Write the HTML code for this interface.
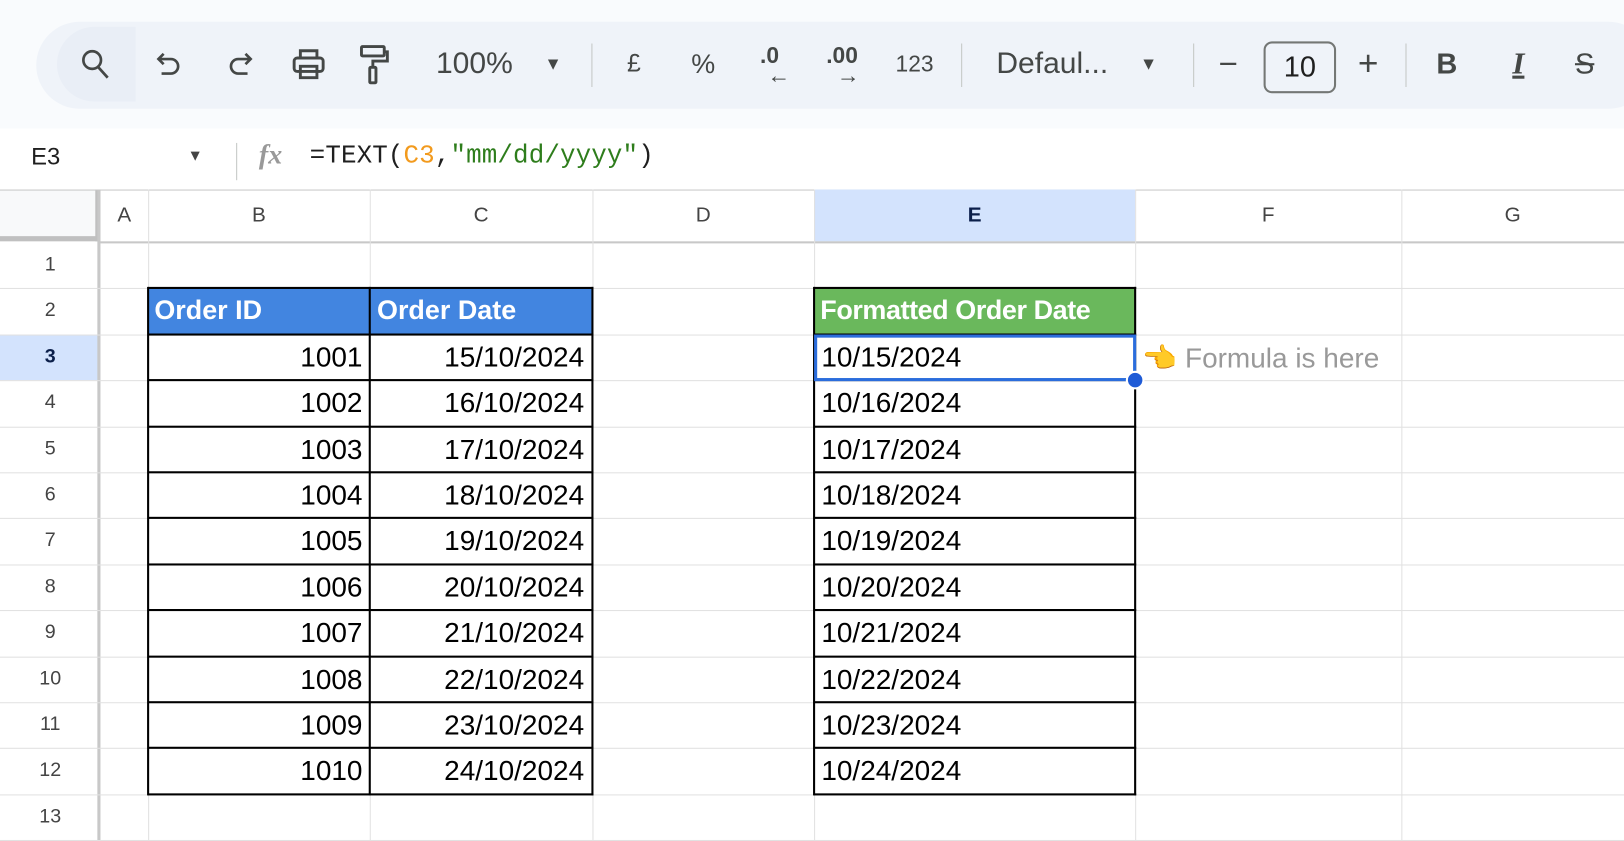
<!DOCTYPE html>
<html><head><meta charset="utf-8"><style>
*{margin:0;padding:0;box-sizing:border-box}
html,body{width:1624px;height:841px;overflow:hidden;background:#fff}
#w{position:absolute;left:0;top:0;width:1568px;height:812px;transform:scale(1.03572);transform-origin:0 0;font-family:"Liberation Sans",Arial,sans-serif;color:#1f1f1f}
.a{position:absolute}
.tb{left:0;top:0;width:1568px;height:124px;background:#f9fbfd}
.pill{left:35px;top:21px;width:1560px;height:84px;background:#eff3f9;border-radius:42px}
.ic{position:absolute;top:62px;transform:translate(-50%,-50%);color:#444746;font-size:24px;white-space:nowrap}
.sep{position:absolute;top:42px;width:1px;height:42px;background:#c4c7c5}
.g{position:absolute;left:0;top:183px;width:1568px;height:629px}
.hl{position:absolute;background:#e1e1e1}
.ch{position:absolute;top:0;height:50px;line-height:50px;text-align:center;font-size:20px;color:#444}
.rh{position:absolute;left:0;width:97px;text-align:center;font-size:19px;color:#444}
.cell{position:absolute;font-size:27px;color:#000;white-space:nowrap}
</style></head><body><div id="w">
<div class="a tb"></div>
<div class="a pill"></div>
<div class="a" style="left:55px;top:26px;width:76px;height:72px;background:#e9eef6;border-radius:36px 0 0 36px"></div>
<svg class="a" style="left:76px;top:45px" width="32" height="34" viewBox="0 0 32 34" fill="none" stroke="#444746" stroke-width="2.6"><circle cx="13" cy="13" r="8.5"/><path d="M19 20l9 10"/></svg>
<svg class="a" style="left:150px;top:48px" width="28" height="30" viewBox="0 0 28 30" fill="none" stroke="#444746" stroke-width="2.6"><path d="M8 4L3 9l5 5"/><path d="M3 9h12a7 7 0 010 14H6"/></svg>
<svg class="a" style="left:218px;top:48px" width="28" height="30" viewBox="0 0 28 30" fill="none" stroke="#444746" stroke-width="2.6"><path d="M19 4l5 5-5 5"/><path d="M24 9H12a7 7 0 000 14h9"/></svg>
<svg class="a" style="left:280px;top:44px" width="36" height="36" viewBox="0 0 36 36" fill="none" stroke="#444746" stroke-width="2.8"><path d="M10 12V5h16v7"/><rect x="4" y="12" width="28" height="13" rx="3"/><rect x="10" y="20" width="16" height="11"/></svg>
<svg class="a" style="left:346px;top:42px" width="30" height="42" viewBox="0 0 30 42" fill="none" stroke="#444746" stroke-width="2.8"><rect x="3" y="3" width="22" height="9" rx="1"/><path d="M25 8h3v9H14v6"/><rect x="11" y="23" width="6" height="15" rx="1"/></svg>
<div class="ic" style="left:458px;font-size:29px">100%</div>
<div class="ic" style="left:534px;font-size:17px">▼</div>
<div class="sep" style="left:571px"></div>
<div class="ic" style="left:612px;font-size:24px">£</div>
<div class="ic" style="left:679px;font-size:26px">%</div>
<div class="ic" style="left:743px;font-size:22px;top:54px;font-weight:bold">.0</div>
<div class="ic" style="left:752px;font-size:22px;top:73px;font-weight:bold">←</div>
<div class="ic" style="left:813px;font-size:22px;top:54px;font-weight:bold">.00</div>
<div class="ic" style="left:819px;font-size:22px;top:73px;font-weight:bold">→</div>
<div class="ic" style="left:883px;font-size:22px">123</div>
<div class="sep" style="left:928px"></div>
<div class="ic" style="left:1016px;font-size:29px">Defaul...</div>
<div class="ic" style="left:1109px;font-size:17px">▼</div>
<div class="sep" style="left:1152px"></div>
<div class="ic" style="left:1186px;font-size:32px">−</div>
<div class="a" style="left:1220px;top:40px;width:70px;height:50px;border:2px solid #747775;border-radius:8px;text-align:center;line-height:46px;font-size:28px;color:#1f1f1f">10</div>
<div class="ic" style="left:1321px;font-size:34px">+</div>
<div class="sep" style="left:1357px"></div>
<div class="ic" style="left:1397px;font-weight:bold;font-size:28px">B</div>
<div class="ic" style="left:1466px;font-style:italic;font-weight:bold;font-family:'Liberation Serif',serif;font-size:30px;text-decoration:underline">I</div>
<div class="ic" style="left:1530px;font-size:28px;text-decoration:line-through">S</div>

<div class="a" style="left:30px;top:138px;font-size:23px">E3</div>
<div class="a" style="left:181px;top:142px;font-size:15px;color:#444">▼</div>
<div class="a" style="left:228px;top:138px;width:1px;height:36px;background:#c4c7c5"></div>
<div class="a" style="left:250px;top:134px;font-size:27px;font-style:italic;font-family:'Liberation Serif',serif;color:#999;font-weight:bold">fx</div>
<div class="a" style="left:299px;top:136px;font-size:25px;font-family:'Liberation Mono',monospace;letter-spacing:0.1px">=TEXT(<span style="color:#f29a1d">C3</span>,<span style="color:#2e7d1c">"mm/dd/yyyy"</span>)</div>

<div class="g">
<div class="a" style="left:0;top:0;width:97px;height:50px;background:#f8f9fa;border-right:5px solid #c0c0c0;border-bottom:5px solid #c0c0c0"></div>
<div class="hl" style="left:0;top:0;width:1568px;height:1px;background:#c8c8c8"></div>
<div class="a" style="left:786px;top:0;width:310px;height:50px;background:#d3e3fd"></div>
<div class="a" style="left:0;top:140px;width:97px;height:44px;background:#d3e3fd"></div>
<div class="hl" style="left:97px;top:50px;width:1471px;height:2px;background:#c8c8c8"></div>
<div class="hl" style="left:0;top:0;width:97px;height:629px;background:transparent;border-right:3px solid #c8c8c8"></div>
<div class="ch" style="left:97px;width:46px">A</div>
<div class="ch" style="left:143px;width:214px">B</div>
<div class="ch" style="left:357px;width:215px">C</div>
<div class="ch" style="left:572px;width:214px">D</div>
<div class="ch" style="left:786px;width:310px;font-weight:bold;color:#0b1f4a">E</div>
<div class="ch" style="left:1096px;width:257px">F</div>
<div class="ch" style="left:1353px;width:215px">G</div>
</div>
</div>
<script>
var g=document.querySelector('.g'),h='';
var cols=[143,357,572,786,1096,1353];
cols.forEach(function(x){h+='<div class="hl" style="left:'+x+'px;top:0;width:1px;height:629px"></div>'});
var top0=51,rh=44.4;
for(var i=0;i<13;i++){var y=top0+(i+1)*rh;
h+='<div class="hl" style="left:0;top:'+y+'px;width:1568px;height:1px"></div>';
var yy=top0+i*rh;
h+='<div class="rh" style="top:'+yy+'px;height:'+rh+'px;line-height:'+rh+'px;'+(i==2?'font-weight:bold;color:#0b1f4a':'')+'">'+(i+1)+'</div>';}
var t2=top0+rh;
h+='<div class="a" style="left:143px;top:'+t2+'px;width:429px;height:'+rh+'px;background:#4285e0"></div>';
h+='<div class="a" style="left:786px;top:'+t2+'px;width:310px;height:'+rh+'px;background:#6ab85c"></div>';
for(var r=0;r<=11;r++){var y=t2+r*rh;
h+='<div class="a" style="left:143px;top:'+(y-1)+'px;width:430px;height:2px;background:#000"></div>';
h+='<div class="a" style="left:786px;top:'+(y-1)+'px;width:311px;height:2px;background:#000"></div>';}
[143,357,572,786,1096].forEach(function(x){h+='<div class="a" style="left:'+(x-1)+'px;top:'+(t2-1)+'px;width:2px;height:'+(11*rh+2)+'px;background:#000"></div>'});
h+='<div class="cell" style="left:149px;top:'+(t2+6)+'px;color:#fff;font-weight:bold;font-size:26px">Order ID</div>';
h+='<div class="cell" style="left:364px;top:'+(t2+6)+'px;color:#fff;font-weight:bold;font-size:26px">Order Date</div>';
h+='<div class="cell" style="left:792px;top:'+(t2+6)+'px;color:#fff;font-weight:bold;font-size:26px;letter-spacing:-0.4px">Formatted Order Date</div>';
for(var k=0;k<10;k++){var y=t2+(k+1)*rh+7,d=15+k;
h+='<div class="cell" style="right:'+(1568-350)+'px;top:'+y+'px">'+(1001+k)+'</div>';
h+='<div class="cell" style="right:'+(1568-564)+'px;top:'+y+'px">'+d+'/10/2024</div>';
h+='<div class="cell" style="left:793px;top:'+y+'px">10/'+d+'/2024</div>';}
var y3=t2+rh;
h+='<div class="a" style="left:786px;top:'+(y3)+'px;width:311px;height:'+(rh+1)+'px;border:3px solid #2b6ddc"></div>';
h+='<div class="a" style="left:1087px;top:'+(y3+rh-9)+'px;width:18px;height:18px;border-radius:50%;background:#1f5bd6;border:2px solid #fff"></div>';
h+='<div class="cell" style="left:1103px;top:'+(y3+7)+'px;color:#999">👈 Formula is here</div>';
g.insertAdjacentHTML('beforeend',h);
</script>
</body></html>
